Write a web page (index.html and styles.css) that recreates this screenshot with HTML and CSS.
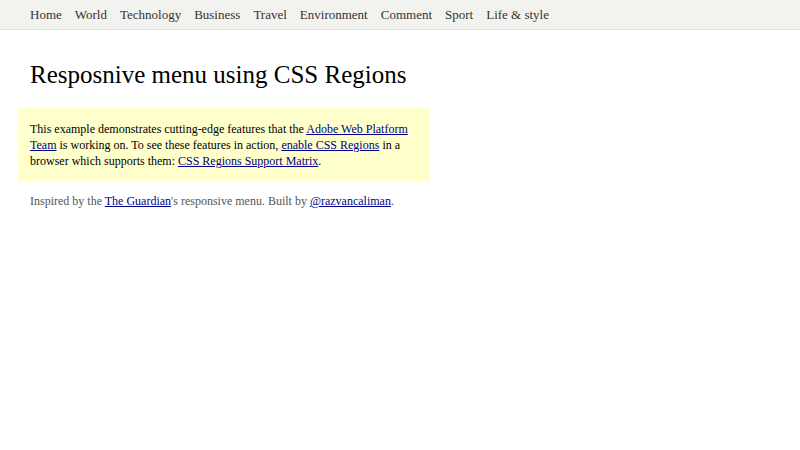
FILE: index.html
```html
<!DOCTYPE html>
<html lang="en">
<head>
    <meta charset="UTF-8">
    <title>Responsive menu using CSS Regions</title>
    <link rel="stylesheet" href="styles.css">
</head>
<body>
    <!-- top navigation -->
    <nav class="nav">
        <ul class="nav-list">
            <li><a href="#">Home</a></li>
            <li><a href="#">World</a></li>
            <li><a href="#">Technology</a></li>
            <li><a href="#">Business</a></li>
            <li><a href="#">Travel</a></li>
            <li><a href="#">Environment</a></li>
            <li><a href="#">Comment</a></li>
            <li><a href="#">Sport</a></li>
            <li><a href="#">Life &amp; style</a></li>
        </ul>
    </nav>

    <div class="content">
        <h1 class="title">Resposnive menu using CSS Regions</h1>

        <div class="notice">
            This example demonstrates cutting-edge features that the <a href="#">Adobe Web Platform Team</a> is working on. To see these features in action, <a href="#">enable CSS Regions</a> in a browser which supports them: <a href="#">CSS Regions Support Matrix</a>.
        </div>

        <p class="credits">Inspired by the <a href="#">The Guardian</a>'s responsive menu. Built by <a href="#">@razvancaliman</a>.</p>
    </div>
</body>
</html>
```

FILE: styles.css
```css
body {
    margin: 0;
    font-family: "Liberation Serif", "Times New Roman", serif;
    color: #000;
    background: #fff;
}
a {
    color: #00008b;
}
/* navigation bar */
.nav {
    background: #f2f2ee;
    border-bottom: 1px solid #e2e2dc;
    height: 29px;
}
.nav-list {
    list-style: none;
    margin: 0;
    padding: 0 0 0 30px;
    display: flex;
    gap: 13px;
}
.nav-list a {
    display: block;
    color: #333;
    text-decoration: none;
    font-size: 13px;
    line-height: 29px;
}
/* page content */
.content {
    padding: 0 18px;
}
.title {
    font-weight: normal;
    font-size: 25px;
    margin: 31px 12px 19px;
}
.notice {
    width: 388px;
    background: #ffffcc;
    padding: 13px 12px 12px;
    font-size: 12px;
    line-height: 16px;
}
.credits {
    color: #555;
    font-size: 12px;
    margin: 13px 12px;
}
```
